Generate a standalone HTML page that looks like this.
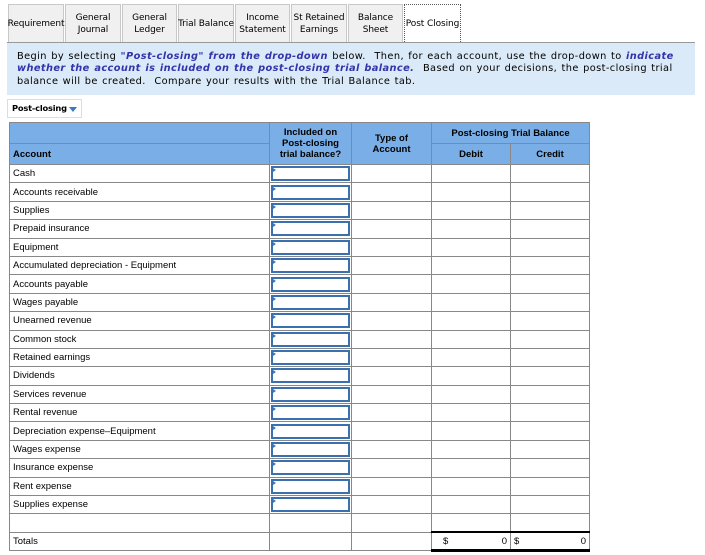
<!DOCTYPE html>
<html><head><style>
body{margin:0;background:#fff;font-family:"DejaVu Sans",Verdana,sans-serif;font-size:8.8px;color:#000;position:relative;width:705px;height:555px;overflow:hidden}
.tab{position:absolute;top:4px;height:38px;background:#f0f0f0;border:1px solid #c8c8c8;border-bottom:none;box-sizing:border-box;display:flex;align-items:center;justify-content:center;text-align:center;font-size:9px;line-height:12px;white-space:nowrap;letter-spacing:-0.1px}
.tab.act{background:#fff;border:1px dotted #555;border-bottom:none}
.line{position:absolute;top:42px;left:7px;width:688px;height:1px;background:#999}
.info{position:absolute;top:43px;left:7px;width:688px;height:52px;background:#dbeaf8;box-sizing:border-box;padding:8px 10px;font-size:9.8px;letter-spacing:0.4px;word-spacing:0.8px;line-height:12.3px;white-space:nowrap}
.info i{color:#3333aa;font-weight:bold}
.dd{position:absolute;top:99px;left:7px;width:75px;height:19px;border:1px solid #ddd;box-sizing:border-box;font-weight:bold;padding:3px 4px;font-size:8.3px;letter-spacing:-0.2px;white-space:nowrap}
.dd span{position:absolute;right:4px;top:7px;border-left:4px solid transparent;border-right:4px solid transparent;border-top:5px solid #3a78c8}
table{position:absolute;left:9px;top:122px;border-collapse:collapse;font-family:"Liberation Sans",Arial,sans-serif;font-size:9.5px;table-layout:fixed;width:580px}
tr{height:18.4px}
td{border:1px solid #888;padding:0 3px;box-sizing:border-box}
th{background:#7aaee6;border:1px solid #888;font-weight:bold;font-size:9.5px;padding:0;line-height:11px}
td.in{padding:1px}
td.in div{height:15px;border:2px solid #3a6fb0;box-sizing:border-box;position:relative}
td.in div:after{content:"";position:absolute;left:0;top:0;border-top:2px solid transparent;border-bottom:2px solid transparent;border-left:3px solid #3a78c8}
.tot td.m{border-top:2px solid #000;border-bottom:3px solid #000}
</style></head><body>
<div class="tab" style="left:8px;width:56px">Requirement</div>
<div class="tab" style="left:65px;width:56px">General<br>Journal</div>
<div class="tab" style="left:122px;width:55px">General<br>Ledger</div>
<div class="tab" style="left:178px;width:56px">Trial Balance</div>
<div class="tab" style="left:235px;width:55px">Income<br>Statement</div>
<div class="tab" style="left:291px;width:56px">St Retained<br>Earnings</div>
<div class="tab" style="left:348px;width:55px">Balance<br>Sheet</div>
<div class="tab act" style="left:404px;width:57px">Post Closing</div>
<div class="line"></div>
<div class="info">Begin by selecting <i>"Post-closing" from the drop-down</i> below.&nbsp; Then, for each account, use the drop-down to <i>indicate</i><br><i>whether the account is included on the post-closing trial balance.</i>&nbsp; Based on your decisions, the post-closing trial<br>balance will be created.&nbsp; Compare your results with the Trial Balance tab.</div>
<div class="dd">Post-closing<span></span></div>
<table>
<colgroup><col style="width:260px"><col style="width:82px"><col style="width:80px"><col style="width:79px"><col style="width:79px"></colgroup>
<tr style="height:21px"><th></th><th rowspan="2">Included on<br>Post-closing<br>trial balance?</th><th rowspan="2">Type of<br>Account</th><th colspan="2">Post-closing Trial Balance</th></tr>
<tr style="height:21px"><th style="text-align:left;padding-left:3px">Account</th><th>Debit</th><th>Credit</th></tr>
<tr><td>Cash</td><td class="in"><div></div></td><td></td><td></td><td></td></tr>
<tr><td>Accounts receivable</td><td class="in"><div></div></td><td></td><td></td><td></td></tr>
<tr><td>Supplies</td><td class="in"><div></div></td><td></td><td></td><td></td></tr>
<tr><td>Prepaid insurance</td><td class="in"><div></div></td><td></td><td></td><td></td></tr>
<tr><td>Equipment</td><td class="in"><div></div></td><td></td><td></td><td></td></tr>
<tr><td>Accumulated depreciation - Equipment</td><td class="in"><div></div></td><td></td><td></td><td></td></tr>
<tr><td>Accounts payable</td><td class="in"><div></div></td><td></td><td></td><td></td></tr>
<tr><td>Wages payable</td><td class="in"><div></div></td><td></td><td></td><td></td></tr>
<tr><td>Unearned revenue</td><td class="in"><div></div></td><td></td><td></td><td></td></tr>
<tr><td>Common stock</td><td class="in"><div></div></td><td></td><td></td><td></td></tr>
<tr><td>Retained earnings</td><td class="in"><div></div></td><td></td><td></td><td></td></tr>
<tr><td>Dividends</td><td class="in"><div></div></td><td></td><td></td><td></td></tr>
<tr><td>Services revenue</td><td class="in"><div></div></td><td></td><td></td><td></td></tr>
<tr><td>Rental revenue</td><td class="in"><div></div></td><td></td><td></td><td></td></tr>
<tr><td>Depreciation expense–Equipment</td><td class="in"><div></div></td><td></td><td></td><td></td></tr>
<tr><td>Wages expense</td><td class="in"><div></div></td><td></td><td></td><td></td></tr>
<tr><td>Insurance expense</td><td class="in"><div></div></td><td></td><td></td><td></td></tr>
<tr><td>Rent expense</td><td class="in"><div></div></td><td></td><td></td><td></td></tr>
<tr><td>Supplies expense</td><td class="in"><div></div></td><td></td><td></td><td></td></tr>
<tr><td></td><td></td><td></td><td></td><td></td></tr>
<tr class="tot"><td>Totals</td><td></td><td></td><td class="m"><span style="float:left;padding-left:8px">$</span><span style="float:right">0</span></td><td class="m"><span style="float:left">$</span><span style="float:right">0</span></td></tr>
</table>
</body></html>
